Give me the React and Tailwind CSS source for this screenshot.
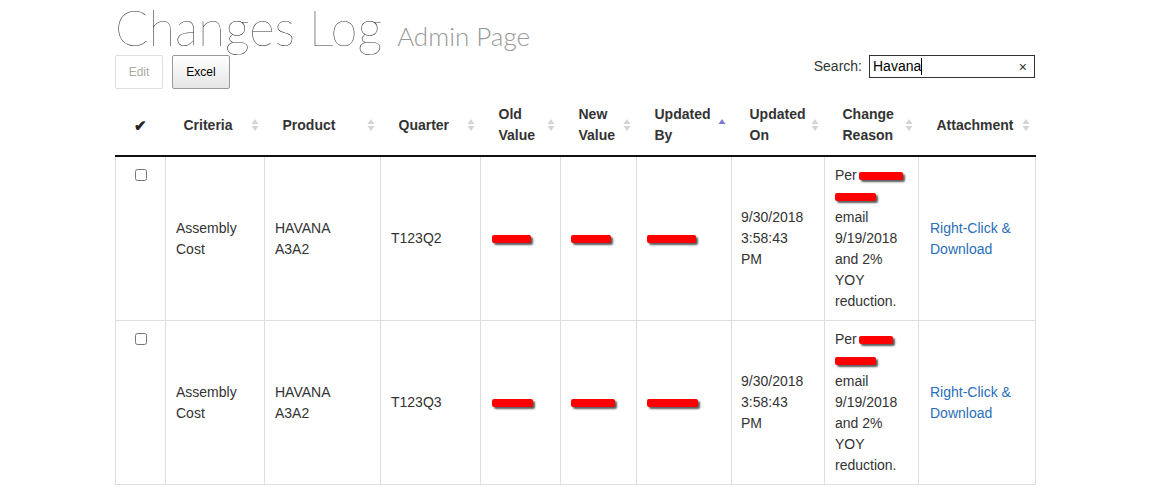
import React from "react";

const font = { fontFamily: '"Liberation Sans", Arial, sans-serif' };
const thin = { fontFamily: 'Lato, "Open Sans", sans-serif' };

function SortIcon({ active }) {
  return (
    <svg width="8" height="14" viewBox="0 0 8 14" className="shrink-0">
      <path d="M4 1 L7.5 6 L0.5 6 Z" fill={active ? "#7a7ad6" : "#d4d4d4"} />
      {!active && <path d="M4 13 L7.5 8 L0.5 8 Z" fill="#d4d4d4" />}
    </svg>
  );
}

function Redact({ w, ml = 0 }) {
  return (
    <span
      className="inline-block h-[8px] align-middle bg-[#ff0000] rounded-[2px] shadow-[2px_2px_2px_rgba(0,0,0,0.65)]"
      style={{ width: w, marginLeft: ml }}
    />
  );
}

const headers = [
  { label: "Criteria" },
  { label: "Product" },
  { label: "Quarter" },
  { label: "Old Value", two: true },
  { label: "New Value", two: true },
  { label: "Updated By", two: true, active: true },
  { label: "Updated On", two: true },
  { label: "Change Reason", two: true },
  { label: "Attachment" },
];

const rows = [
  { quarter: "T123Q2", old: 39, nw: 40, by: 49, r1: 44, r2: 41 },
  { quarter: "T123Q3", old: 41, nw: 44, by: 51, r1: 34, r2: 41 },
];

const td = "border border-[#ddd] border-t-0 px-[10px] py-[8px] align-middle";

export default function App() {
  return (
    <div className="bg-white min-h-[487px] text-[#333]" style={font}>
      <div className="ml-[115px] w-[920px]">
        <div className="flex items-baseline h-[55px] pt-[1px]">
          <h1 className="text-[49px] leading-[52px] font-thin text-[#333]" style={thin}>
            Changes Log
          </h1>
          <span className="ml-[15px] text-[26px] leading-[30px] font-light text-[#999]" style={thin}>
            Admin Page
          </span>
        </div>

        <div className="flex items-start justify-between">
          <div className="flex gap-[9px]">
            <button className="h-[34px] w-[48px] border border-[#ddd] rounded-[2px] bg-white text-[12px] text-[#aaa]">
              Edit
            </button>
            <button className="h-[34px] w-[58px] border border-[#999] rounded-[2px] bg-gradient-to-b from-white to-[#e6e6e6] text-[12px] text-black">
              Excel
            </button>
          </div>
          <div className="flex items-center gap-[7px] text-[14px]">
            <span className="text-[#333]">Search:</span>
            <div className="flex items-center w-[166px] h-[23px] border border-[#333] px-[3px]">
              <span className="text-[14px] text-black">Havana</span>
              <span className="w-px h-[17px] bg-black" />
              <span className="ml-auto mr-[4px] text-[14px] text-[#333] leading-none">×</span>
            </div>
          </div>
        </div>

        <table className="mt-[6px] w-[920px] table-fixed border-collapse text-[14px] leading-[21px]">
          <colgroup>
            <col className="w-[50px]" />
            <col className="w-[99px]" />
            <col className="w-[116px]" />
            <col className="w-[100px]" />
            <col className="w-[80px]" />
            <col className="w-[76px]" />
            <col className="w-[95px]" />
            <col className="w-[93px]" />
            <col className="w-[94px]" />
            <col className="w-[117px]" />
          </colgroup>
          <thead>
            <tr className="border-b-2 border-[#111]">
              <th className="py-[9px] text-center font-bold text-[#222] text-[15px]">✔</th>
              {headers.map((h) => (
                <th key={h.label} className="py-[9px] pl-[18px] pr-[6px] text-left font-bold text-[#333]">
                  <div className="flex items-center justify-between gap-[2px]">
                    <span className="min-w-0">
                      {h.two ? (
                        <>
                          {h.label.split(" ")[0]}
                          <br />
                          {h.label.split(" ")[1]}
                        </>
                      ) : (
                        h.label
                      )}
                    </span>
                    <SortIcon active={h.active} />
                  </div>
                </th>
              ))}
            </tr>
          </thead>
          <tbody>
            {rows.map((r) => (
              <tr key={r.quarter} className="border-b border-[#ddd]">
                <td className="border border-[#ddd] border-t-0 align-top text-center pt-[12px]">
                  <input type="checkbox" className="w-[12px] h-[12px] align-top" />
                </td>
                <td className={td}>
                  Assembly
                  <br />
                  Cost
                </td>
                <td className={td}>
                  HAVANA
                  <br />
                  A3A2
                </td>
                <td className={td}>{r.quarter}</td>
                <td className={td}>
                  <Redact w={r.old} ml={1} />
                </td>
                <td className={td}>
                  <Redact w={r.nw} />
                </td>
                <td className={td}>
                  <Redact w={r.by} />
                </td>
                <td className="border border-[#ddd] border-t-0 px-[9px] py-[8px] align-middle">
                  9/30/2018
                  <br />
                  3:58:43
                  <br />
                  PM
                </td>
                <td className={td}>
                  Per <Redact w={r.r1} ml={-2} />
                  <br />
                  <Redact w={r.r2} />
                  <br />
                  email
                  <br />
                  9/19/2018
                  <br />
                  and 2%
                  <br />
                  YOY
                  <br />
                  reduction.
                </td>
                <td className="border border-[#ddd] border-t-0 px-[11px] py-[8px] align-middle">
                  <a className="text-[#2a6ebb]">
                    Right-Click &amp;
                    <br />
                    Download
                  </a>
                </td>
              </tr>
            ))}
          </tbody>
        </table>
      </div>
    </div>
  );
}
